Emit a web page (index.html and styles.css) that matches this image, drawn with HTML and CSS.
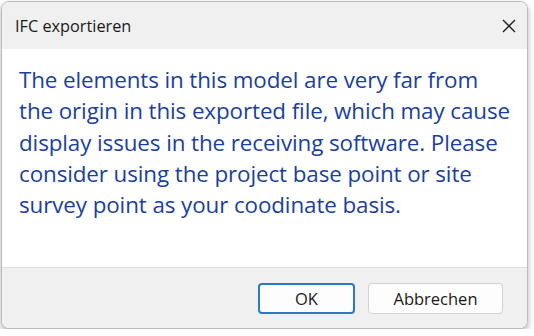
FILE: index.html
```html
<!DOCTYPE html>
<html lang="de">
<head>
  <meta charset="UTF-8">
  <title>IFC exportieren</title>
  <link rel="stylesheet" href="styles.css">
</head>
<body>
  <div class="window">
    <div class="titlebar">
      <span class="title">IFC exportieren</span>
      <svg class="close" width="14" height="14" viewBox="0 0 14 14">
        <path d="M1 1 L13 13 M13 1 L1 13" stroke="#1a1a1a" stroke-width="1.3" fill="none"/>
      </svg>
    </div>
    <div class="content">
      <p class="message">The elements in this model are very far from<br>the origin in this exported file, which may cause<br>display issues in the receiving software. Please<br>consider using the project base point or site<br>survey point as your coodinate basis.</p>
    </div>
    <div class="footer">
      <button class="btn btn-default">OK</button>
      <button class="btn">Abbrechen</button>
    </div>
  </div>
</body>
</html>
```

FILE: styles.css
```css
body { margin: 0; background: #fff; font-family: "Open Sans", "Noto Sans", sans-serif; }
.window { margin: 1px 0 0 1px; width: 525px; height: 326px; border: 1px solid #bcbcbc; border-radius: 8px; box-shadow: 0 3px 6px rgba(0,0,0,0.3); overflow: hidden; display: flex; flex-direction: column; background: #fff; }
.titlebar { height: 47px; background: #f0f0f0; display: flex; align-items: center; justify-content: space-between; padding: 0 11px 0 13px; flex-shrink: 0; }
.title { font-size: 16.3px; color: #1a1a1a; }
.close { margin-top: 1px; }
.content { flex: 1; padding: 15px 0 0 17px; }
.message { margin: 0; white-space: nowrap; font-size: 22.4px; letter-spacing: -0.1px; line-height: 31.3px; color: #1b3f9e; }
.footer { height: 60px; background: #f0f0f0; border-top: 1px solid #e0e0e0; display: flex; align-items: center; justify-content: flex-end; gap: 13px; padding-right: 24px; flex-shrink: 0; }
.btn { height: 31px; width: 135px; font-family: inherit; font-size: 16.5px; color: #1a1a1a; background: #fdfdfd; border: 1px solid #d2d2d2; border-radius: 4px; padding: 0; }
.btn-default { width: 97px; border: 2px solid #2f78c4; }
```
